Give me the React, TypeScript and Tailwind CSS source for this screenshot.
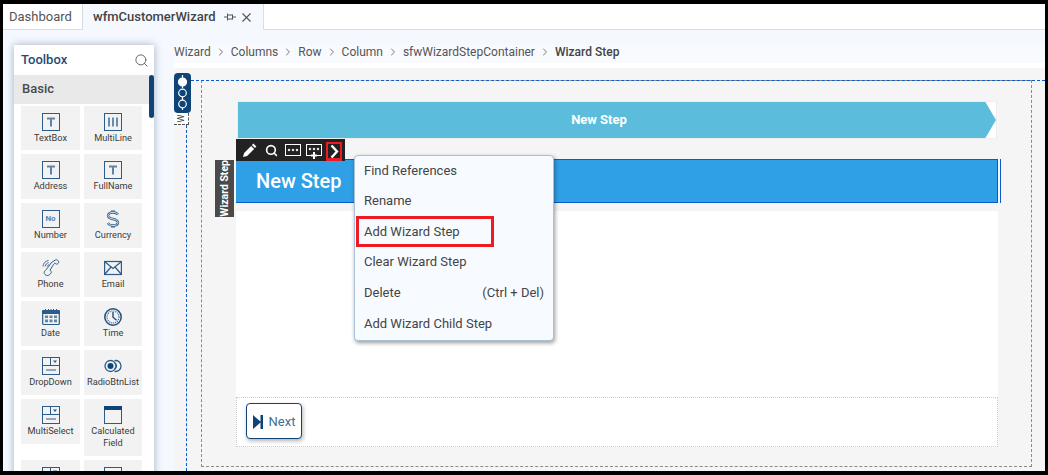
import { ChevronRight, Search, X } from "lucide-react";
import type { ReactNode } from "react";

const NAVY = "#2c5c8c";

function Box({ children }: { children: ReactNode }) {
  return (
    <svg width="18" height="18" viewBox="0 0 18 18" fill="none" stroke={NAVY}>
      {children}
    </svg>
  );
}

function LetterT() {
  return (
    <Box>
      <rect x="0.5" y="0.5" width="17" height="17" />
      <path d="M5 5.500h8M9 5.500v8" strokeWidth="2" stroke="#5f84a8" />
    </Box>
  );
}

function DropIcon() {
  return (
    <Box>
      <rect x="0.5" y="0.5" width="17" height="17" />
      <path d="M0.500 8.500h17M8.500 0.500v8M4 13h10" />
      <path d="M11 3.500h4l-2 2.500z" fill={NAVY} stroke="none" />
    </Box>
  );
}

const tools: { label: string; icon: ReactNode; tall?: boolean }[] = [
  { label: "TextBox", icon: <LetterT /> },
  {
    label: "MultiLine",
    icon: (
      <Box>
        <rect x="0.5" y="0.5" width="17" height="17" />
        <path d="M5 4.500v9M9 4.500v9M13 4.500v9" strokeWidth="1.600" stroke="#4a749c" />
      </Box>
    ),
  },
  { label: "Address", icon: <LetterT /> },
  { label: "FullName", icon: <LetterT /> },
  {
    label: "Number",
    icon: (
      <div className="flex h-[18px] w-[18px] items-center justify-center border border-[#2c5c8c] text-[8px] font-bold text-[#5f84a8]">
        No
      </div>
    ),
  },
  {
    label: "Currency",
    icon: (
      <Box>
        <path
          d="M14 4.500C12.800 3 11 2.500 9 2.500 6 2.500 4 3.700 4 5.700c0 4.300 10 2.300 10 6.800 0 2-2.200 3-5 3-2.500 0-4.200-.8-5.200-2.500"
          strokeWidth="2.400"
        />
        <path
          d="M14 4.500C12.800 3 11 2.500 9 2.500 6 2.500 4 3.700 4 5.700c0 4.300 10 2.300 10 6.800 0 2-2.200 3-5 3-2.500 0-4.200-.8-5.200-2.500"
          strokeWidth="0.900"
          stroke="#f2f2f2"
        />
        <path d="M8 0v2M10 0v2M8 16v2M10 16v2" strokeWidth="1" />
      </Box>
    ),
  },
  {
    label: "Phone",
    icon: (
      <Box>
        <path
          d="M13 1.200c.9-.7 1.800-.6 2.600 0 1 .9 1.500 2 .7 3-.7.9-1.700 1.100-2.400.7l-1.100-.8c-.6.5-1.400 1.500-2.300 3l-2.500 4.100 1 1c.5.700.3 1.800-.5 2.600-.9 1-2.500 2-3.700 1.700-1.200-.3-2.600-1.600-2.700-2.800 0-1 1-2 2-3 2-2.100 3.600-4.600 5-6.800C10.300 2.900 11.500 2.200 13 1.200z"
          strokeWidth="1"
        />
        <path
          d="M1 7.500C1.200 4.300 3.300 2 6.500 1.500M3.200 7.500C3.400 5.500 4.700 4.100 6.700 3.700M5.300 7.500c.1-1 .7-1.500 1.600-1.700"
          strokeWidth="0.900"
        />
      </Box>
    ),
  },
  {
    label: "Email",
    icon: (
      <Box>
        <rect x="0.6" y="2.500" width="16.800" height="13" strokeWidth="1.200" />
        <path d="M0.500 2.500L9 9.500l8.500-7M0.500 15.500L7 8M17.500 15.500L11 8" strokeWidth="1.200" />
      </Box>
    ),
  },
  {
    label: "Date",
    icon: (
      <Box>
        <rect x="0.7" y="2.500" width="16.600" height="14" rx="1" strokeWidth="1.200" />
        <path d="M0.700 2.500h16.600v3H0.700z" fill={NAVY} />
        <path d="M3.500 1v2M6.500 1v2M9 1v2M11.500 1v2M14.500 1v2" strokeWidth="1" />
        <path
          d="M3 7.500h3v2.600H3zM7.500 7.500h3v2.600h-3zM12 7.500h3v2.600h-3zM3 11.600h3v2.600H3zM7.500 11.600h3v2.600h-3zM12 11.600h3v2.600h-3z"
          fill="#5f84a8"
          stroke="none"
        />
      </Box>
    ),
  },
  {
    label: "Time",
    icon: (
      <Box>
        <circle cx="9" cy="9" r="8.200" strokeWidth="1.500" stroke="#1f4f80" />
        <circle cx="9" cy="9" r="6" strokeWidth="1.200" strokeDasharray="1 1" />
        <path d="M9 4v5.200l3.600 3" strokeWidth="1.400" stroke="#1f4f80" />
      </Box>
    ),
  },
  { label: "DropDown", icon: <DropIcon /> },
  {
    label: "RadioBtnList",
    icon: (
      <Box>
        <circle cx="6.500" cy="9" r="5.500" strokeWidth="1.300" />
        <circle cx="6.500" cy="9" r="3" fill="#0f4479" stroke="none" />
        <path d="M10.500 3.600a5.500 5.500 0 1 1 0 10.800M10.500 6.200a3 3 0 0 1 0 5.600" strokeWidth="1.300" />
      </Box>
    ),
  },
  { label: "MultiSelect", icon: <DropIcon /> },
  {
    label: "Calculated Field",
    tall: true,
    icon: (
      <Box>
        <rect x="0.5" y="0.5" width="17" height="17" />
        <rect x="0" y="0" width="18" height="4" fill="#0f4479" stroke="none" />
      </Box>
    ),
  },
  { label: "", icon: <DropIcon /> },
  { label: "", icon: <LetterT /> },
];

function Tile({ label, icon, tall, first }: { label: string; icon: ReactNode; tall?: boolean; first?: boolean }) {
  return (
    <div
      className={`flex flex-col items-center bg-[#f2f2f2] pt-[7px] ${tall ? "h-[57px]" : first ? "h-[44px]" : "h-[45px]"}`}
    >
      {icon}
      <span className={`mt-px text-center text-[9.200px] leading-[12px] text-[#3b3b3b] ${tall ? "w-[50px]" : "whitespace-nowrap"}`}>
        {label}
      </span>
    </div>
  );
}

function Toolbox() {
  return (
    <aside className="h-[520px] w-[140px] bg-white shadow-[0_0_8px_rgba(60,80,110,0.45)]">
      <div className="flex h-[30px] items-center justify-between pl-[7px] pr-[5px]">
        <span className="text-[13px] font-medium text-[#1f4a75]">Toolbox</span>
        <Search size={15} strokeWidth={1.400} className="text-[#555555]" />
      </div>
      <div className="relative">
        <div className="flex h-[29px] items-center bg-[#e9e9e9] pb-[2px] pl-2 text-[13px] font-medium text-[#4a4a4a]">
          Basic
        </div>
        <div className="absolute right-0 top-0 h-[43px] w-[5px] rounded-sm bg-[#0f4479]" />
        <div className="grid grid-cols-[59px_58px] items-start gap-1 pl-[7px] pt-[2px]">
          {tools.map((t, i) => (
            <Tile key={i} label={t.label} icon={t.icon} tall={t.tall} first={i < 2} />
          ))}
        </div>
      </div>
    </aside>
  );
}

function Toolbar() {
  return (
    <div className="absolute left-0 top-[-20px] z-10 flex h-[22px] w-[109px] items-center bg-[#222222] pl-[7px]">
      <svg width="14" height="14" viewBox="0 0 14 14" fill="white">
        <path d="M10.400 0.600l3 3-1.500 1.500-3-3zM8.100 2.900l3 3-7 7L0 14l1.100-4.100z" />
      </svg>
      <Search size={13} strokeWidth={3} color="white" className="ml-[8px]" />
      <svg width="16" height="12" viewBox="0 0 16 12" fill="white" stroke="white" className="ml-[7px]">
        <rect x="0.5" y="0.5" width="15" height="11" fill="none" />
        <circle cx="4" cy="6" r="0.800" />
        <circle cx="8" cy="6" r="0.800" />
        <circle cx="12" cy="6" r="0.800" />
      </svg>
      <svg width="16" height="15" viewBox="0 0 16 15" fill="white" stroke="white" className="ml-[5px] mt-[2px]">
        <rect x="0.5" y="0.5" width="15" height="11" fill="none" />
        <circle cx="4" cy="5" r="0.800" />
        <circle cx="8" cy="5" r="0.800" />
        <circle cx="12" cy="5" r="0.800" />
        <path d="M8 8v7M5 11.500h6" strokeWidth="2" />
      </svg>
      <div className="ml-[4px] flex h-[19px] w-[16px] items-center justify-center self-end border-[2.500px] border-b-[3px] border-[#ed1c24]">
        <svg width="9" height="13" viewBox="0 0 9 13" fill="none" stroke="white" strokeWidth="2.400">
          <path d="M1.500 0.500l5.500 6-5.500 6" />
        </svg>
      </div>
    </div>
  );
}

const menu = ["Find References", "Rename", "Add Wizard Step", "Clear Wizard Step", "Delete", "Add Wizard Child Step"];

function ContextMenu() {
  return (
    <div className="absolute left-[118px] top-[-4px] z-20 w-[200px] rounded border border-[#a9c1d8] bg-[#f7fbff] shadow-[1px_2px_4px_rgba(0,0,0,0.4)]">
      {menu.map((m) => (
        <div
          key={m}
          className="relative flex h-[30.600px] items-center justify-between pb-[2px] pl-[9px] pr-[9px] text-[13px] text-[#444444]"
        >
          <span>{m}</span>
          {m === "Delete" && <span>(Ctrl + Del)</span>}
          {m === "Add Wizard Step" && (
            <div className="absolute left-[1px] top-[-1px] h-[31px] w-[138px] border-[3px] border-[#ed1c24]" />
          )}
        </div>
      ))}
    </div>
  );
}

function Canvas() {
  return (
    <div className="relative min-h-0 flex-1 bg-[#f5f5f5] pb-1 pl-[27px] pr-[13px] pt-3">
      <div className="h-full border border-dashed border-[#8a8a8a] pl-[34px] pt-5">
        <div className="ml-px h-[38px] w-[760px] border border-[#eeeeee] bg-white">
          <div className="flex h-full items-center justify-center bg-[#5bbcdc] pr-9 text-[13px] font-bold text-white [clip-path:polygon(0_0,98.600%_0,100%_50%,98.600%_100%,0_100%)]">
            New Step
          </div>
        </div>
        <div className="relative mt-5 w-[765px]">
          <Toolbar />
          <div className="absolute left-[-21px] top-px flex h-[57px] w-[19px] items-center justify-center bg-[#4a4a4a]">
            <span className="rotate-180 whitespace-nowrap text-[10.500px] font-bold text-white [writing-mode:vertical-rl]">
              Wizard Step
            </span>
          </div>
          <ContextMenu />
          <div className="flex h-[44px] w-[762px] items-center border-y border-r border-[#0a5ac8] bg-[#30a0e6] pl-5 text-[20px] font-medium text-white">
            New Step
          </div>
          <div className="absolute right-0 top-0 h-[44px] w-px bg-[#0a5ac8]" />
          <div className="mt-2 h-[186px] w-[762px] bg-white" />
          <div className="flex h-[50px] w-[762px] items-center border border-dotted border-[#cccccc] bg-white pb-[2px] pl-[9px]">
            <button className="flex h-[36px] w-[56px] items-center justify-center gap-[6px] rounded border-[1.500px] border-[#0f4479] bg-white pt-px text-[13px] text-[#3f6d98] shadow-[1px_2px_4px_rgba(0,0,0,0.3)]">
              <svg width="10" height="14" viewBox="0 0 10 14" fill="#0f4479">
                <path d="M0 0l8 7-8 7zM7.500 0H10v14H7.500z" />
              </svg>
              Next
            </button>
          </div>
        </div>
      </div>
      <div className="absolute left-3 right-0 top-3 border-t border-dashed border-[#0a5ac8]" />
      <div className="absolute bottom-0 left-3 top-[57px] border-l border-dashed border-[#0a5ac8]" />
      <div className="absolute left-0 top-[5px] flex h-10 w-[17px] flex-col items-center rounded-sm bg-[#0f4479]">
        <svg width="11" height="40" viewBox="0 0 11 40" fill="none" stroke="white" strokeWidth="1.200">
          <path d="M5.500 2v3M5.500 13v2M5.500 24v3M5.500 35v2" />
          <circle cx="5.500" cy="9" r="4" fill="white" />
          <circle cx="5.500" cy="20" r="3.800" />
          <circle cx="5.500" cy="31" r="3.800" />
        </svg>
      </div>
      <div className="absolute left-0 top-[45px] flex h-3 w-[15px] items-center justify-center border-b border-r border-dashed border-[#555555] bg-white">
        <span className="-rotate-90 text-[9px] leading-none text-[#333333]">W</span>
      </div>
    </div>
  );
}

const crumbs = ["Wizard", "Columns", "Row", "Column", "sfwWizardStepContainer"];

export default function App() {
  return (
    <div className="h-[475px] w-[1048px] overflow-hidden bg-black pb-1 pl-[3px] pr-[3px] pt-1 font-['Roboto',sans-serif]">
      <div className="flex h-full flex-col bg-[#f5f9ff]">
        <div className="flex h-[26px] shrink-0 border-b border-[#d8dde2] bg-white text-[13px]">
          <div className="flex w-[80px] items-center border-r border-[#d8dde2] pl-[6px] text-[#555555]">Dashboard</div>
          <div className="flex h-[26px] w-[181px] items-center border-r border-[#d8dde2] bg-[#f5f9ff] pl-[10px] font-medium text-[#444444]">
            wfmCustomerWizard
            <svg width="12" height="10" viewBox="0 0 12 10" fill="none" stroke="#555555" className="ml-[8px]">
              <path d="M0 5h3M3.500 1.500v7M3.500 3h5v4h-5M8.500 5H12M8.500 2.500v5" />
            </svg>
            <X size={15} strokeWidth={1.800} className="ml-[3px] text-[#555555]" />
          </div>
        </div>
        <div className="flex min-h-0 flex-1">
          <div className="w-[171px] shrink-0 overflow-hidden pl-[11px] pt-[15px]">
            <Toolbox />
          </div>
          <div className="flex min-w-0 flex-1 flex-col pt-[15px]">
            <div className="flex h-[18px] shrink-0 items-center bg-[#f8fafe] pb-1 text-[12px] text-[#555555]">
              {crumbs.map((c) => (
                <span key={c} className="flex items-center">
                  {c}
                  <ChevronRight size={12} className="mx-[4px] text-[#777777]" />
                </span>
              ))}
              <span className="font-medium text-[#444444]">Wizard Step</span>
            </div>
            <div className="h-[5px] shrink-0 bg-white" />
            <Canvas />
          </div>
        </div>
      </div>
    </div>
  );
}
